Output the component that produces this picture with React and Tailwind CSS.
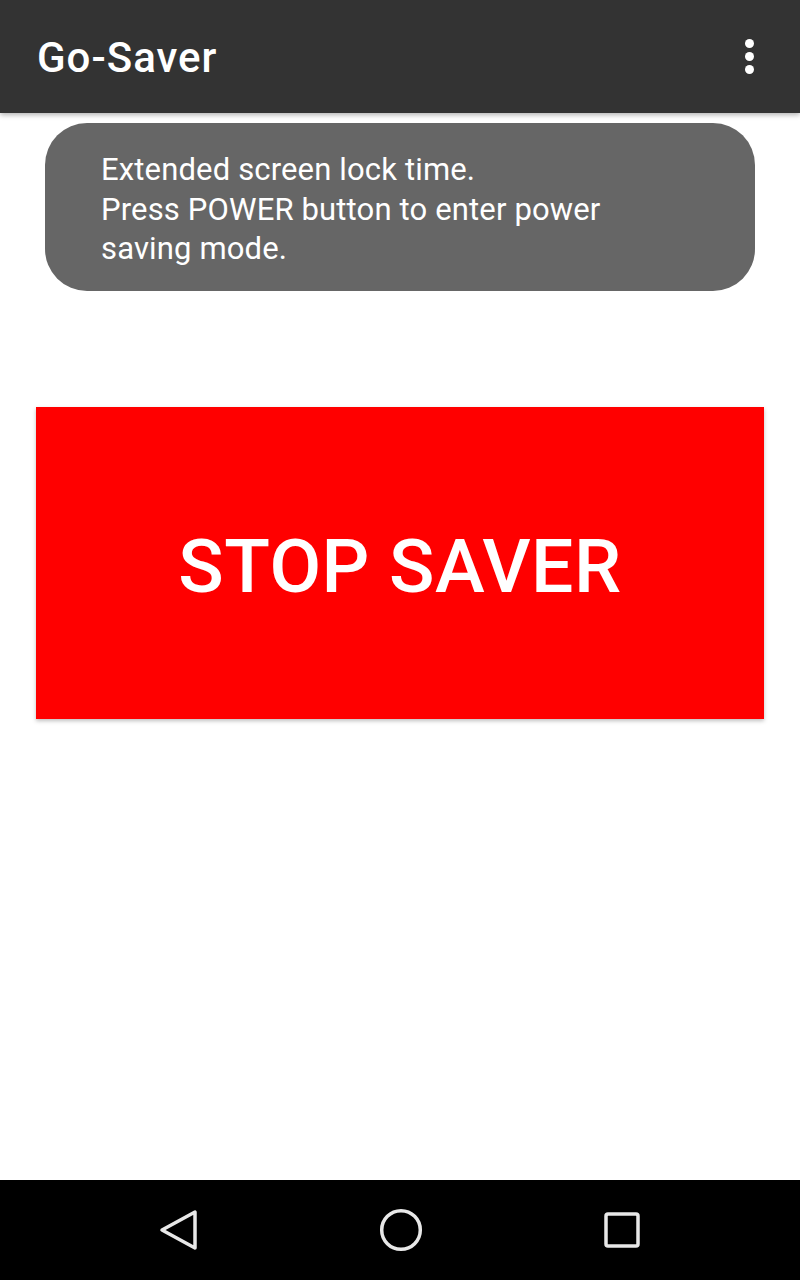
import React from "react"

const App = () => {
    return (
        <div
            style={{ fontFamily: "Roboto, 'Noto Sans', sans-serif" }}
            className="w-[800px] h-[1280px] bg-white flex flex-col overflow-hidden"
        >
            {/* toolbar */}
            <div className="relative z-10 h-[113px] shrink-0 bg-[#333333] flex items-center pl-[37px] pr-[46px] shadow-[0_2px_5px_rgba(0,0,0,0.3)]">
                <h1 className="text-white text-[42px] font-medium leading-none tracking-[1px] mt-[2px]">Go-Saver</h1>
                <div className="ml-auto flex flex-col gap-[4px] items-center">
                    <span className="block size-[9px] rounded-full bg-white"></span>
                    <span className="block size-[9px] rounded-full bg-white"></span>
                    <span className="block size-[9px] rounded-full bg-white"></span>
                </div>
            </div>

            {/* content */}
            <div className="flex-1 flex flex-col">
                {/* message bubble */}
                <div className="mt-[10px] mx-[45px] h-[168px] rounded-[42px] bg-[#666666] pl-[56px] pt-[27px]">
                    <p className="text-white text-[31px] leading-[39.5px] tracking-[0.15px] w-[540px]">
                        Extended screen lock time.<br />
                        Press POWER button to enter power<br />
                        saving mode.
                    </p>
                </div>

                {/* stop button */}
                <button className="mt-[116px] mx-[36px] h-[312px] bg-[#ff0000] flex items-center justify-center pt-[7px] shadow-[0_2px_4px_rgba(0,0,0,0.25)]">
                    <span className="text-white text-[75px] font-medium leading-none tracking-[0.5px]">STOP SAVER</span>
                </button>
            </div>

            {/* nav bar */}
            <div className="h-[100px] shrink-0 bg-black flex items-center justify-center gap-[180px]">
                <svg width="40" height="42" viewBox="0 0 40 42">
                    <path d="M36 3 L36 39 L3 21 Z" fill="none" stroke="#e8e8e8" strokeWidth="3.5" strokeLinejoin="round" />
                </svg>
                <svg width="44" height="44" viewBox="0 0 44 44">
                    <circle cx="22" cy="22" r="19.3" fill="none" stroke="#e8e8e8" strokeWidth="3.5" />
                </svg>
                <svg width="38" height="38" viewBox="0 0 38 38">
                    <rect x="3" y="3" width="32" height="32" rx="2" fill="none" stroke="#e8e8e8" strokeWidth="3.5" />
                </svg>
            </div>
        </div>
    )
}

export default App
